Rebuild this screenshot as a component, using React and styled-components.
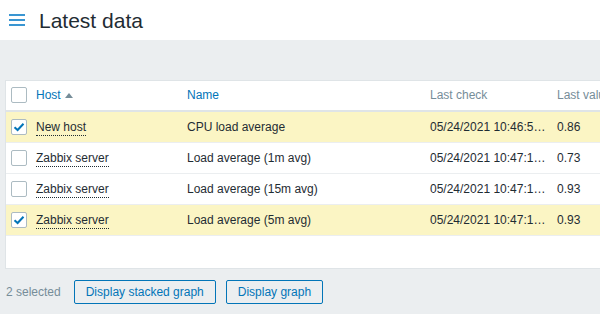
import React from 'react'
import styled, { createGlobalStyle } from 'styled-components'

const GlobalStyle = createGlobalStyle`
  html, body {
    margin: 0;
    padding: 0;
    background: #ebeef0;
    font-family: "Liberation Sans", Arial, sans-serif;
    font-size: 12px;
    color: #1f2c33;
    overflow: hidden;
  }
`

const rows = [
  { host: 'New host', name: 'CPU load average', check: '05/24/2021 10:46:53 AM', value: '0.86', selected: true },
  { host: 'Zabbix server', name: 'Load average (1m avg)', check: '05/24/2021 10:47:14 AM', value: '0.73', selected: false },
  { host: 'Zabbix server', name: 'Load average (15m avg)', check: '05/24/2021 10:47:15 AM', value: '0.93', selected: false },
  { host: 'Zabbix server', name: 'Load average (5m avg)', check: '05/24/2021 10:47:16 AM', value: '0.93', selected: true },
]

const Check = ({ checked }) => (
  <Box>
    {checked && (
      <svg width="12" height="10" viewBox="0 0 12 10">
        <path d="M1.5 5.2 L4.6 8 L10.5 1.8" fill="none" stroke="#0275b8" strokeWidth="2" />
      </svg>
    )}
  </Box>
)

const App = () => {
  return (
    <Page>
      <GlobalStyle />
      <Header>
        <Burger>
          <span />
          <span />
          <span />
        </Burger>
        <Title>Latest data</Title>
      </Header>

      <Main>
        <Panel>
          <Table>
            <colgroup>
              <col style={{ width: 25 }} />
              <col style={{ width: 151 }} />
              <col style={{ width: 243 }} />
              <col style={{ width: 127 }} />
              <col style={{ width: 150 }} />
            </colgroup>
            <thead>
              <tr>
                <Th><Check /></Th>
                <Th link>Host <SortArrow /></Th>
                <Th link>Name</Th>
                <Th>Last check</Th>
                <Th>Last value</Th>
              </tr>
            </thead>
            <tbody>
              {rows.map((r, i) => (
                <Row key={i} selected={r.selected}>
                  <Td><Check checked={r.selected} /></Td>
                  <Td><HostLink>{r.host}</HostLink></Td>
                  <Td>{r.name}</Td>
                  <Td>{r.check}</Td>
                  <Td>{r.value}</Td>
                </Row>
              ))}
            </tbody>
          </Table>
        </Panel>

        <Footer>
          <Selected>2 selected</Selected>
          <Button>Display stacked graph</Button>
          <Button>Display graph</Button>
        </Footer>
      </Main>
    </Page>
  )
}

export default App

const Page = styled.div`
  width: 600px;
  height: 314px;
  overflow: hidden;
`

const Header = styled.div`
  height: 40px;
  background: #ffffff;
  display: flex;
  align-items: center;
  padding-left: 9px;
`

const Burger = styled.div`
  width: 16px;
  display: flex;
  flex-direction: column;
  gap: 3px;
  margin-right: 14px;
  & > span {
    display: block;
    height: 2px;
    background: #3a96d2;
  }
`

const Title = styled.h1`
  margin: 0;
  font-size: 21px;
  font-weight: normal;
  color: #1f2c33;
  line-height: 1;
`

const Main = styled.div`
  padding: 40px 0 0 5px;
`

const Panel = styled.div`
  width: 700px;
  background: #ffffff;
  border: 1px solid #dfe4e7;
  padding-bottom: 32px;
`

const Table = styled.table`
  width: 696px;
  border-collapse: collapse;
  table-layout: fixed;
`

const Th = styled.th`
  height: 27px;
  padding: 0 5px 2px;
  text-align: left;
  font-weight: normal;
  white-space: nowrap;
  color: ${p => (p.link ? '#0275b8' : '#768d99')};
  border-bottom: 2px solid #dfe4e7;
  vertical-align: middle;
`

const SortArrow = styled.span`
  display: inline-block;
  width: 0;
  height: 0;
  margin-left: 1px;
  border-left: 4px solid transparent;
  border-right: 4px solid transparent;
  border-bottom: 5px solid #768d99;
  vertical-align: 1px;
`

const Row = styled.tr`
  background: ${p => (p.selected ? '#fbf5c4' : '#ffffff')};
`

const Td = styled.td`
  height: 30px;
  padding: 0 5px;
  border-bottom: 1px solid #ebeef0;
  white-space: nowrap;
  overflow: hidden;
  text-overflow: ellipsis;
  vertical-align: middle;
`

const Box = styled.span`
  display: flex;
  align-items: center;
  justify-content: center;
  box-sizing: border-box;
  width: 16px;
  height: 16px;
  border: 1px solid #acbbc2;
  border-radius: 2px;
  background: #ffffff;
`

const HostLink = styled.span`
  border-bottom: 1px dotted #1f2c33;
  padding-bottom: 1px;
`

const Footer = styled.div`
  display: flex;
  align-items: center;
  padding: 11px 0 0 1px;
`

const Selected = styled.span`
  color: #768d99;
  margin-right: 13px;
`

const Button = styled.button`
  height: 24px;
  padding: 0 11px;
  margin-right: 10px;
  background: transparent;
  border: 1px solid #0275b8;
  border-radius: 2px;
  color: #0275b8;
  font-family: "Liberation Sans", Arial, sans-serif;
  font-size: 12px;
  cursor: pointer;
`
